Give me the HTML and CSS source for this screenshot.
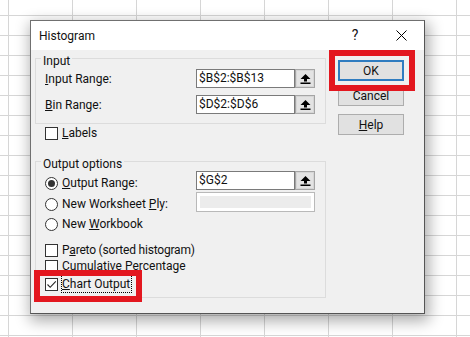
FILE: index.html
```html
<!DOCTYPE html>
<html>
<head>
<meta charset="utf-8">
<title>Histogram</title>
<link rel="stylesheet" href="styles.css">
</head>
<body>
<div class="sheet">
  <div class="dialog">
    <div class="titlebar">
      <span class="title">Histogram</span>
      <span class="tb-btn tb-help">?</span>
      <span class="tb-btn tb-close">
        <svg width="11" height="11" viewBox="0 0 11 11"><path d="M0.5 0.5 L10.5 10.5 M10.5 0.5 L0.5 10.5" stroke="#000" stroke-width="1" fill="none"/></svg>
      </span>
    </div>
    <div class="body">
      <div class="left">
        <div class="group group-input">
          <div class="legend">Input</div>
          <div class="row">
            <span class="lbl"><u>I</u>nput Range:</span>
            <div class="refedit">
              <span class="field">$B$2:$B$13</span>
              <span class="pick"><svg width="11" height="10" viewBox="0 0 11 10"><path d="M5.5 0 L10.5 5 H7 V7.6 H4 V5 H0.5 Z" fill="#000"/><rect x="0.5" y="8.5" width="10" height="1.5" fill="#000"/></svg></span>
            </div>
          </div>
          <div class="row row-bin">
            <span class="lbl"><u>B</u>in Range:</span>
            <div class="refedit">
              <span class="field">$D$2:$D$6</span>
              <span class="pick"><svg width="11" height="10" viewBox="0 0 11 10"><path d="M5.5 0 L10.5 5 H7 V7.6 H4 V5 H0.5 Z" fill="#000"/><rect x="0.5" y="8.5" width="10" height="1.5" fill="#000"/></svg></span>
            </div>
          </div>
        </div>
        <div class="opt opt-labels"><span class="box"></span><span><u>L</u>abels</span></div>
        <div class="group group-output">
          <div class="legend">Output options</div>
          <div class="row row-out1">
            <div class="opt"><span class="radio on"></span><span><u>O</u>utput Range:</span></div>
            <div class="refedit">
              <span class="field">$G$2</span>
              <span class="pick"><svg width="11" height="10" viewBox="0 0 11 10"><path d="M5.5 0 L10.5 5 H7 V7.6 H4 V5 H0.5 Z" fill="#000"/><rect x="0.5" y="8.5" width="10" height="1.5" fill="#000"/></svg></span>
            </div>
          </div>
          <div class="row row-out2">
            <div class="opt"><span class="radio"></span><span>New Worksheet <u>P</u>ly:</span></div>
            <div class="disabled-field"><span class="inner"></span></div>
          </div>
          <div class="opt opt-wb"><span class="radio"></span><span>New <u>W</u>orkbook</span></div>
          <div class="opt opt-pareto"><span class="box"></span><span>P<u>a</u>reto (sorted histogram)</span></div>
          <div class="opt opt-cum"><span class="box"></span><span>Cumulative Percentage</span></div>
          <div class="opt opt-chart"><span class="box"><svg width="11" height="11" viewBox="0 0 11 11"><path d="M1.5 5.5 L4.2 8.3 L9.8 2.3" stroke="#222" stroke-width="1.1" fill="none"/></svg></span><span class="focus"><u>C</u>hart Output</span></div>
        </div>
      </div>
      <div class="right">
        <div class="btn btn-default">OK</div>
        <div class="btn btn-cancel">Cancel</div>
        <div class="btn btn-help"><u>H</u>elp</div>
      </div>
    </div>
    <div class="mark mark-ok"></div>
    <div class="mark mark-chart"></div>
  </div>
</div>
</body>
</html>
```
FILE: styles.css
```css
* { box-sizing: border-box; }
html, body { margin: 0; padding: 0; }
body {
  font-family: Roboto, "Liberation Sans", sans-serif;
  font-size: 12px;
  color: #111;
}
u { text-decoration: underline; text-underline-offset: 1px; }

.sheet {
  position: relative;
  width: 470px;
  height: 337px;
  overflow: hidden;
  background-color: #fff;
  background-image:
    linear-gradient(to right, #d6d6d6 1px, transparent 1px),
    linear-gradient(to bottom, #d6d6d6 1px, transparent 1px);
  background-size: 64px 20px;
  background-position: 8px 15px;
}

.dialog {
  position: absolute;
  left: 30px;
  top: 20px;
  width: 395px;
  height: 294px;
  border: 1px solid #707070;
  border-right-color: #555;
  border-bottom-color: #555;
  background: #f0f0f0;
  box-shadow: 2px 5px 14px 2px rgba(0, 0, 0, 0.33);
  display: flex;
  flex-direction: column;
}

.titlebar {
  height: 29px;
  background: #fff;
  display: flex;
  align-items: center;
}
.title {
  flex: 1;
  padding-left: 8px;
  font-size: 12px;
}
.tb-btn {
  width: 46px;
  height: 29px;
  display: flex;
  align-items: center;
  justify-content: center;
}
.tb-help { font-size: 14px; padding-bottom: 1px; }

.body {
  flex: 1;
  display: flex;
}
.left {
  width: 295px;
  padding: 8px 0 0 4px;
}
.right {
  margin-left: 12px;
  padding-top: 10px;
  display: flex;
  flex-direction: column;
}

.group {
  border: 1px solid #dcdcdc;
  padding: 0 10px 9px 9px;
}
.legend {
  width: fit-content;
  margin: -6px 0 0 -4px;
  padding: 0 2px;
  line-height: 16px;
  background: #f0f0f0;
}
.row {
  display: flex;
  align-items: center;
  justify-content: space-between;
}
.row-bin { margin-top: 7px; }
.lbl { line-height: 16px; }

.refedit {
  display: flex;
  width: 119px;
  height: 19px;
}
.field {
  flex: 1;
  border: 1px solid #7a7a7a;
  background: #fff;
  padding-left: 2px;
  line-height: 17px;
}
.pick {
  width: 20px;
  border: 1px solid #a5a5a5;
  box-shadow: inset 0 0 0 1px #d6d6d6;
  background: #e3e3e3;
  display: flex;
  align-items: center;
  justify-content: center;
  padding-top: 1px;
}

.opt {
  display: flex;
  align-items: center;
  line-height: 16px;
}
.box, .radio {
  width: 13px;
  height: 13px;
  border: 1px solid #333;
  background: #fff;
  margin-right: 4px;
  flex: none;
  display: flex;
  align-items: center;
  justify-content: center;
}
.radio { border-radius: 50%; }
.radio.on::after {
  content: "";
  width: 7px;
  height: 7px;
  border-radius: 50%;
  background: #333;
}

.opt-labels { margin: 1px 0 0 10px; }

.group-output { margin-top: 20px; padding-bottom: 5px; }
.row-out1 { margin-top: -1px; align-items: flex-start; }
.row-out1 .opt { margin-top: 4px; }
.row-out2 { margin-top: 1px; align-items: flex-start; }
.row-out2 .opt { margin-top: 4px; }
.disabled-field {
  width: 119px;
  height: 20px;
  border: 1px solid #b9b9b9;
  background: #fff;
  padding: 3px;
  display: flex;
}
.disabled-field .inner { flex: 1; background: #ececec; }
.opt-wb { margin-top: 4px; }
.opt-pareto { margin-top: 10px; letter-spacing: -0.2px; }
.opt-chart { margin-top: 2px; }
.focus { outline: 1px dotted #000; outline-offset: 0; padding: 0 1px 0 0; }

.btn {
  width: 66px;
  height: 21px;
  border: 1px solid #adadad;
  background: #e1e1e1;
  display: flex;
  align-items: center;
  justify-content: center;
}
.btn-default { border: 2px solid #2f7cc0; }
.btn-cancel { margin-top: 4px; }
.btn-help { margin-top: 8px; }

.mark {
  position: absolute;
  border: 6px solid #e3171f;
}
.mark-ok { left: 298px; top: 29px; width: 86px; height: 41px; }
.mark-chart { left: 3px; top: 249px; width: 108px; height: 32px; }
```
